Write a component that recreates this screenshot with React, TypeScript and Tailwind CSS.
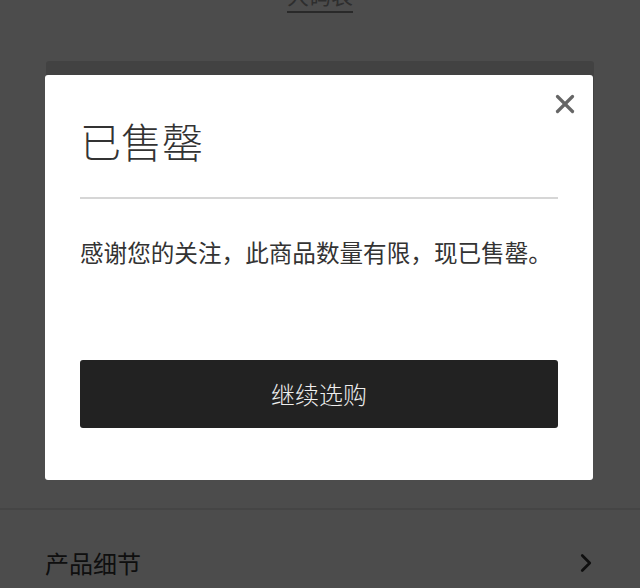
import { X, ChevronRight } from "lucide-react";

const FONT = { fontFamily: '"Noto Sans CJK SC", "Noto Sans", sans-serif' };

export default function App() {
  return (
    <div className="relative h-[588px] w-[640px] overflow-hidden bg-white" style={FONT}>
      {/* page underneath */}
      <div className="flex flex-col">
        <div className="flex justify-center">
          <span className="-mt-[21px] border-b-2 border-[#8a8a8a] pb-[2px] text-[22px] leading-[30px] text-[#999]">
            大码表
          </span>
        </div>
        <div className="mx-[46px] mt-[48px] h-[150px] rounded-[3px] bg-[#dcdcdc]" />
        <div className="mt-[297px] border-t-2 border-[#e6e6e6] pl-[45px] pr-[39px]">
          <div className="flex h-[106px] items-center justify-between">
            <span className="text-[24px] text-[#333]">产品细节</span>
            <ChevronRight className="h-[30px] w-[30px] text-[#333]" strokeWidth={2.2} />
          </div>
        </div>
      </div>

      {/* overlay */}
      <div className="absolute inset-0 bg-black/70" />

      {/* modal */}
      <div className="absolute left-[45px] top-[75px] flex h-[405px] w-[548px] flex-col rounded-[3px] bg-white px-[35px]">
        <button className="absolute right-[13px] top-[14px] text-[#666]">
          <X className="h-[30px] w-[30px]" strokeWidth={2.6} />
        </button>
        <h2 className="mt-[37px] text-[41px] font-light leading-[56px] text-[#333]">已售罄</h2>
        <div className="mt-[29px] h-[2px] bg-[#d6d6d6]" />
        <p className="mt-[36px] text-[23.6px] leading-[34px] text-[#333]">
          感谢您的关注，此商品数量有限，现已售罄。
        </p>
        <button className="mt-[91px] flex h-[68px] items-center justify-center rounded-[3px] bg-[#222] text-[24px] font-light text-[#eee]">
          继续选购
        </button>
      </div>
    </div>
  );
}
